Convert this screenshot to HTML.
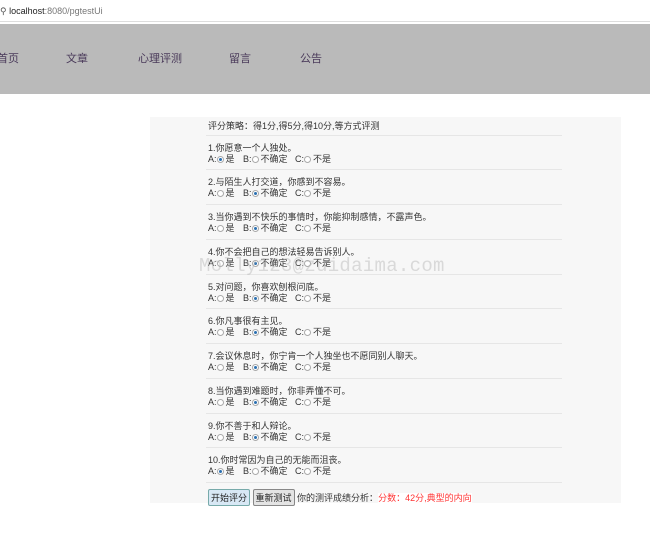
<!DOCTYPE html>
<html><head><meta charset="utf-8"><style>
*{margin:0;padding:0;box-sizing:border-box}
body{width:650px;height:545px;background:#fff;position:relative;overflow:hidden;font-family:"Liberation Sans","Noto Sans CJK SC",sans-serif;font-size:9px;color:#333}
.abs{position:absolute;white-space:nowrap}
.bar{position:absolute;left:0;top:0;width:650px;height:22px;background:#fff;border-bottom:1px solid #ddd}
.nav{position:absolute;left:0;top:24px;width:650px;height:70px;background:#bababa}
.nav span{position:absolute;top:26px;font-size:11px;color:#4a3a5a}
.panel{position:absolute;left:150px;top:117px;width:471px;height:386px;background:#f7f7f7}
.hr{position:absolute;left:206px;width:356px;height:1px;background:#e6e6e6}
.r{display:inline-block;width:7px;height:7px;border:1px solid #aaa;border-radius:50%;background:#fff;vertical-align:-1px;position:relative;margin:0 2px 0 0}
.r.on::after{content:"";position:absolute;left:1px;top:1px;width:3px;height:3px;border-radius:50%;background:#2a6fb0}
.btn{display:inline-block;border:1px solid #888;border-radius:2px;background:#e4e4e4;padding:1px 2px;font-size:9px;color:#222}
</style></head><body>
<div class="bar"></div>
<div class="abs" style="left:0;top:6px;font-size:9px;color:#555">⚲ <b style="color:#222;font-weight:normal">localhost</b><span style="color:#777">:8080/pgtestUi</span></div>
<div class="nav"><span style="left:-3px">首页</span><span style="left:66px">文章</span><span style="left:138px">心理评测</span><span style="left:229px">留言</span><span style="left:300px">公告</span></div>
<div class="panel"></div>
<div class="abs" style="left:208px;top:119px">评分策略：得1分,得5分,得10分,等方式评测</div>
<div id="q"></div>
<div class="abs" style="left:199px;top:255px;font-family:'Liberation Mono',monospace;font-size:19px;color:rgba(180,180,180,0.45);letter-spacing:0.3px">Molly123@zuidaima.com</div>
<div class="abs" style="left:208px;top:489px"><span class="btn" style="background:#d8e8f5;border-color:#7aa">开始评分</span> <span class="btn">重新测试</span> 你的测评成绩分析：<span style="color:#f33;background:#fff">分数：42分,典型的内向</span></div>
<script>
var qs=["1.你愿意一个人独处。","2.与陌生人打交道，你感到不容易。","3.当你遇到不快乐的事情时，你能抑制感情，不露声色。","4.你不会把自己的想法轻易告诉别人。","5.对问题，你喜欢刨根问底。","6.你凡事很有主见。","7.会议休息时，你宁肯一个人独坐也不愿同别人聊天。","8.当你遇到难题时，你非弄懂不可。","9.你不善于和人辩论。","10.你时常因为自己的无能而沮丧。"];
var sel=[0,1,1,1,1,1,1,1,1,0];var h="";
for(var i=0;i<10;i++){var y=134.7+i*34.75;
h+='<div class="hr" style="top:'+Math.round(y)+'px"></div>';
h+='<div class="abs" style="left:208px;top:'+Math.round(y+6)+'px">'+qs[i]+'</div>';
var o=['<span style="display:inline-block;width:35px">A:<i class="r'+(sel[i]==0?' on':'')+'"></i>是</span>','<span style="display:inline-block;width:52px">B:<i class="r'+(sel[i]==1?' on':'')+'"></i>不确定</span>','<span>C:<i class="r'+(sel[i]==2?' on':'')+'"></i>不是</span>'];
h+='<div class="abs" style="left:208px;top:'+Math.round(y+17)+'px">'+o.join('')+'</div>';}
h+='<div class="hr" style="top:482px"></div>';
document.getElementById('q').innerHTML=h;
</script>
</body></html>
